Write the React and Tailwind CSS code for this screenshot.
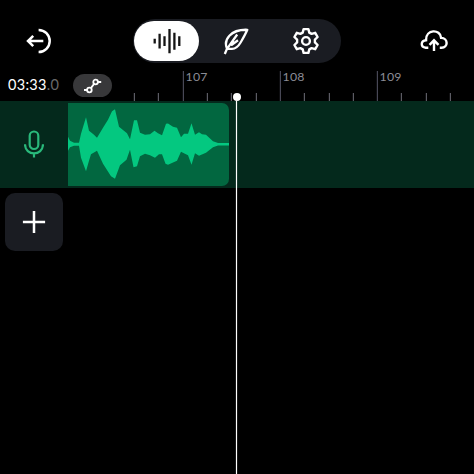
const ticks = [
  { x: 134 }, { x: 158 }, { x: 183, bar: 107 }, { x: 207 }, { x: 231 }, { x: 256 },
  { x: 280, bar: 108 }, { x: 304 }, { x: 329 }, { x: 353 }, { x: 377, bar: 109 },
  { x: 401 }, { x: 426 }, { x: 450 },
];

function ExitIcon() {
  return (
    <svg className="h-[26px] w-[26px]" viewBox="0 0 26 26" fill="none" stroke="#fff" strokeWidth="2.5">
      <path d="M12.600 1.900A11.100 11.100 0 0 1 12.600 24.100" />
      <path d="M17.300 13H2.300M7.200 7.800 2 13l5.200 5.200" />
    </svg>
  );
}

function WaveIcon() {
  return (
    <svg className="h-[26px] w-[30px]" viewBox="0 0 30 26" stroke="#141414" strokeWidth="2.300">
      <path d="M1.700 10.800v4.600M6.600 5.800v14.600M11.500 8.200v9.900M16.500 1v24.200M21.400 4.800v17M26.300 8.200v9.900" />
    </svg>
  );
}

function FeatherIcon() {
  return (
    <svg className="h-[27px] w-[26px]" viewBox="0 0 26 27" fill="none" stroke="#fff" strokeWidth="2.300" strokeLinejoin="round">
      <path d="M1.800 26 4 20.800C.2 12 7.500 1.200 24.300 1.800 22.300 6.500 20.100 10.300 17.600 14.500 14.800 19.300 12.500 20.800 9 20.800H4L14.200 6.500M10.200 12 8.800 16.800 15 12.300" />
    </svg>
  );
}

function GearIcon() {
  return (
    <svg className="h-[28px] w-[28px]" viewBox="0 0 28 28" fill="none" stroke="#fff" strokeWidth="2.400" strokeLinejoin="round">
      <path d="M11.600 2.100h4.800l.9 3.500 2.300 1.300 3.600-1.100 2.400 4.200-2.700 2.600v2.800l2.700 2.600-2.400 4.200-3.600-1.100-2.300 1.300-.9 3.500h-4.800l-.9-3.500-2.300-1.300-3.600 1.100-2.400-4.200 2.700-2.600v-2.800l-2.700-2.600 2.400-4.200 3.600 1.100 2.300-1.300z" />
      <circle cx="14" cy="14" r="3.900" />
    </svg>
  );
}

function CloudIcon() {
  return (
    <svg className="h-[22px] w-[28px]" viewBox="0 0 28 22" fill="none" stroke="#fff" strokeWidth="2.400">
      <path d="M8.300 17.700H5.700C.5 17.300.3 10.800 6.100 10.200 5.700-1.100 20.400-1.300 21.100 7.900 28.500 8.300 28.300 17.600 21.500 17.700H19.800" />
      <path d="M14 21V10.800M9.500 14.800 14 10.300l4.500 4.500" />
    </svg>
  );
}

function AutomationIcon() {
  return (
    <svg className="h-[16px] w-[20px]" viewBox="0 0 20 16" fill="none" stroke="#fff" strokeWidth="1.800">
      <circle cx="6.400" cy="12" r="2.300" />
      <circle cx="12.600" cy="4" r="2.300" />
      <path d="M1 12h3.200M7.900 10.100l3.200-4.200M15 4H18.200" />
    </svg>
  );
}

function MicIcon() {
  return (
    <svg className="h-[28px] w-[20px]" viewBox="0 0 20 28" fill="none" stroke="#29b97b" strokeWidth="2.200">
      <rect x="5.700" y="1.500" width="8.600" height="17.500" rx="4.300" />
      <path d="M1 14.200c0 12.200 18 12.200 18 0M10 23.200v4.300" />
    </svg>
  );
}

function Waveform() {
  return (
    <svg className="h-[82px] w-[161px]" viewBox="68 103.300 161 82" fill="#04c880">
      <path d="M68 137 70 141 74 143H79L81 134 86 117.500 89 131 94 135 97 138 103 128 108 120 112 111.500 115 109.500 119 127 127 133.500 130 139.500 134 120.500H137L140 133 145 135 150 134.500 154.500 131 158 133.500 162 135.500 166 124 168 123.800 173 127 177 128 181 137.500 184 134 188 134 191.500 123.500 195 135 199 132.500 202 134.500 206 135 213 141.500 218 143.400H229V145.700H218L213 147.500 206 153 199 156 195 153.500 191.500 165 188 155.500 181 152 177 161 168 165 165.500 164 162 154.500 159 154.500 155 158 150 155.500 145 154 140 156.500 137 166.500 133.500 167.500 130 150 126.500 160 120 165.500 115 179 111 176.500 103 164 97 151 91 154.500 89 161 86 171.500 81 158 79 146H74L70 147.500 68 151Z" />
    </svg>
  );
}

export default function App() {
  return (
    <div className="relative h-[474px] w-[474px] overflow-hidden bg-black font-[Lato,sans-serif] text-white">
      <header className="flex h-[66px] items-start pt-[19px]">
        <button className="ml-[26px] mt-[9px]"><ExitIcon /></button>
        <nav className="ml-[81px] flex h-[44px] w-[208px] items-center rounded-full bg-[#1a1c22]">
          <button className="ml-px flex h-10 w-[65px] shrink-0 items-center justify-center rounded-full bg-white pl-0.5">
            <WaveIcon />
          </button>
          <button className="ml-[24px]"><FeatherIcon /></button>
          <button className="ml-[43px]"><GearIcon /></button>
        </nav>
        <button className="ml-[79px] mt-[11px]"><CloudIcon /></button>
      </header>

      <div className="grid h-[35px]">
        <div className="col-start-1 row-start-1 flex pt-[8px]">
          <div className="ml-[8px] w-[65px] text-[14.5px] leading-[22px] tracking-[0.3px]">
            03:33<span className="text-[#68686a]">.0</span>
          </div>
          <button className="flex h-[23px] w-[39px] items-center justify-center rounded-full bg-[#38383a]">
            <AutomationIcon />
          </button>
        </div>
        <svg className="col-start-1 row-start-1 h-[35px] w-[474px]" viewBox="0 0 474 35">
          {ticks.map(({ x, bar }) => (
            <g key={x}>
              <rect x={x - 0.2} y={bar ? 5 : 27} width="1.200" height={bar ? 30 : 8} fill={bar ? "#484856" : "#5c5c64"} />
              {bar && (
                <text x={x + 2.600} y="15.300" fontSize="12.300" letterSpacing="0.200" fill="#8b8c95">{bar}</text>
              )}
            </g>
          ))}
        </svg>
      </div>

      <main>
        <section className="flex h-[87px] bg-[#04291c]">
          <div className="flex w-[68px] items-center justify-center pb-0.5">
            <MicIcon />
          </div>
          <div className="mt-0.5 h-[83px] w-[161px] overflow-hidden rounded-r-[7px] bg-[#026740]">
            <Waveform />
          </div>
        </section>
        <button className="ml-[5px] mt-[5px] flex h-[58px] w-[58px] items-center justify-center rounded-[10px] bg-[#1a1c22]">
          <svg className="h-6 w-6" viewBox="0 0 24 24" stroke="#fff" strokeWidth="2.500">
            <path d="M.9 12h22.200M12 .9v22.200" />
          </svg>
        </button>
      </main>

      <div className="absolute bottom-0 left-[232px] top-[93px] flex w-[9px] flex-col items-center">
        <div className="h-[8px] w-[8px] shrink-0 rounded-full bg-white" />
        <div className="w-px flex-1 bg-white shadow-[0_0_1px_#fff]" />
      </div>
    </div>
  );
}
